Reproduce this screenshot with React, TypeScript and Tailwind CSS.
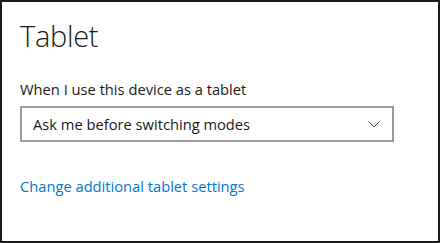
export default function App() {
  return (
    <div
      className="w-[440px] h-[243px] border-2 border-[#1a1a1a] bg-white text-black"
      style={{ fontFamily: '"Open Sans", "Noto Sans", sans-serif' }}
    >
      <div className="pl-[18px] pr-[44px] pt-[14px]">
        <h1 className="text-[29px] leading-[40px] font-light tracking-[-0.3px] text-[#1a1a1a]">Tablet</h1>

        <p className="mt-[23px] text-[14.7px] leading-[20px] text-[#1a1a1a]">When I use this device as a tablet</p>

        <div className="mt-[7px] h-[36px] w-[374px] border-2 border-[#999999] flex items-center justify-between pl-[11px] pr-[12px]">
          <span className="text-[14.7px] leading-[20px] text-[#1a1a1a]">Ask me before switching modes</span>
          <svg width="12" height="7" viewBox="0 0 12 7" fill="none">
            <path d="M0.5 0.5 L6 6 L11.5 0.5" stroke="#444" strokeWidth="1" />
          </svg>
        </div>

        <a className="block mt-[34px] text-[14.7px] leading-[20px] text-[#0078d7]">Change additional tablet settings</a>
      </div>
    </div>
  );
}
